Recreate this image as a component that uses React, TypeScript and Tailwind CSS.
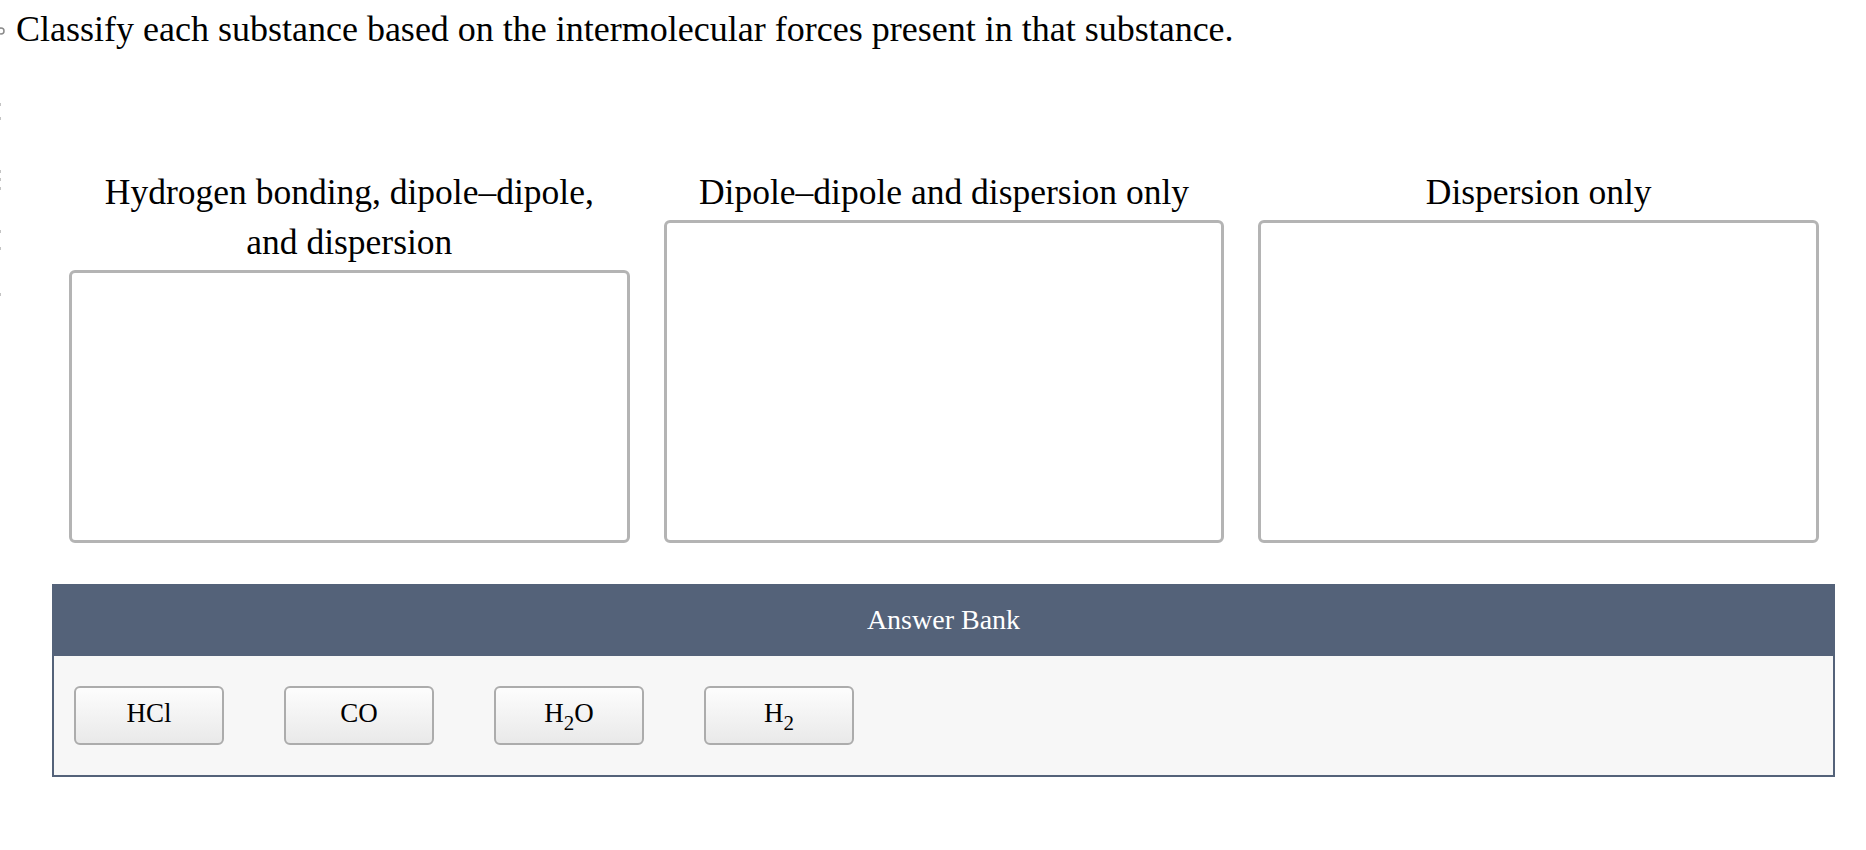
const columns = [
  { title: ["Hydrogen bonding, dipole–dipole,", "and dispersion"] },
  { title: ["Dipole–dipole and dispersion only"] },
  { title: ["Dispersion only"] },
];

function Chip({ children }: { children: React.ReactNode }) {
  return (
    <div className="flex h-[59px] w-[150px] items-center justify-center rounded-[6px] border-2 border-[#acacac] bg-gradient-to-b from-[#fdfdfd] to-[#e9e9e9] pb-[4px] text-[27px] leading-none text-black">
      <span>{children}</span>
    </div>
  );
}

function Sub({ children }: { children: React.ReactNode }) {
  return <span className="relative top-[8px] text-[21px]">{children}</span>;
}

export default function App() {
  return (
    <div className="flex min-h-[850px] w-[1866px] bg-white font-['Liberation_Serif',serif] text-black">
      {/* cut-off edge of the side rail */}
      <div className="flex w-[6px] shrink-0 flex-col">
        <svg className="mt-[27px]" width="6" height="8" viewBox="0 0 6 8">
          <circle cx="1" cy="4" r="3" fill="none" stroke="#8a8a8a" strokeWidth="1.5" />
        </svg>
        <div className="mt-[68px] h-[3px] w-[1px] bg-[#c4c4c4]" />
        <div className="mt-[11px] h-[3px] w-[1px] bg-[#c4c4c4]" />
        <div className="mt-[50px] h-[3px] w-[1px] bg-[#c4c4c4]" />
        <div className="mt-[5px] h-[3px] w-[1px] bg-[#c4c4c4]" />
        <div className="mt-[6px] h-[3px] w-[1px] bg-[#c4c4c4]" />
        <div className="mt-[40px] h-[3px] w-[1px] bg-[#c4c4c4]" />
        <div className="mt-[14px] h-[3px] w-[1px] bg-[#c4c4c4]" />
        <div className="mt-[43px] h-[3px] w-[1px] bg-[#c4c4c4]" />
      </div>

      <div className="flex flex-1 flex-col">
        <h1 className="pl-[10px] pt-[9px] text-[36px] font-normal leading-[41px]">
          Classify each substance based on the intermolecular forces present in that substance.
        </h1>

        {/* drop targets */}
        <div className="ml-[63px] mt-[117px] grid h-[376px] w-[1750px] grid-cols-3 gap-x-[34px]">
          {columns.map((col, i) => (
            <div key={i} className="flex flex-col">
              <div className="mb-[3px] text-center text-[35.5px] leading-[50px]">
                {col.title.map((line) => (
                  <div key={line}>{line}</div>
                ))}
              </div>
              <div className="flex-1 rounded-[6px] border-[3px] border-[#b4b4b4] bg-white" />
            </div>
          ))}
        </div>

        {/* answer bank */}
        <div className="ml-[46px] mt-[41px] w-[1783px] border-2 border-t-0 border-[#546279]">
          <div className="flex h-[72px] items-center justify-center bg-[#546279] text-[28px] text-white">
            Answer Bank
          </div>
          <div className="flex gap-[60px] bg-[#f7f7f7] px-[20px] py-[30px]">
            <Chip>HCl</Chip>
            <Chip>CO</Chip>
            <Chip>
              H<Sub>2</Sub>O
            </Chip>
            <Chip>
              H<Sub>2</Sub>
            </Chip>
          </div>
        </div>
      </div>
    </div>
  );
}
